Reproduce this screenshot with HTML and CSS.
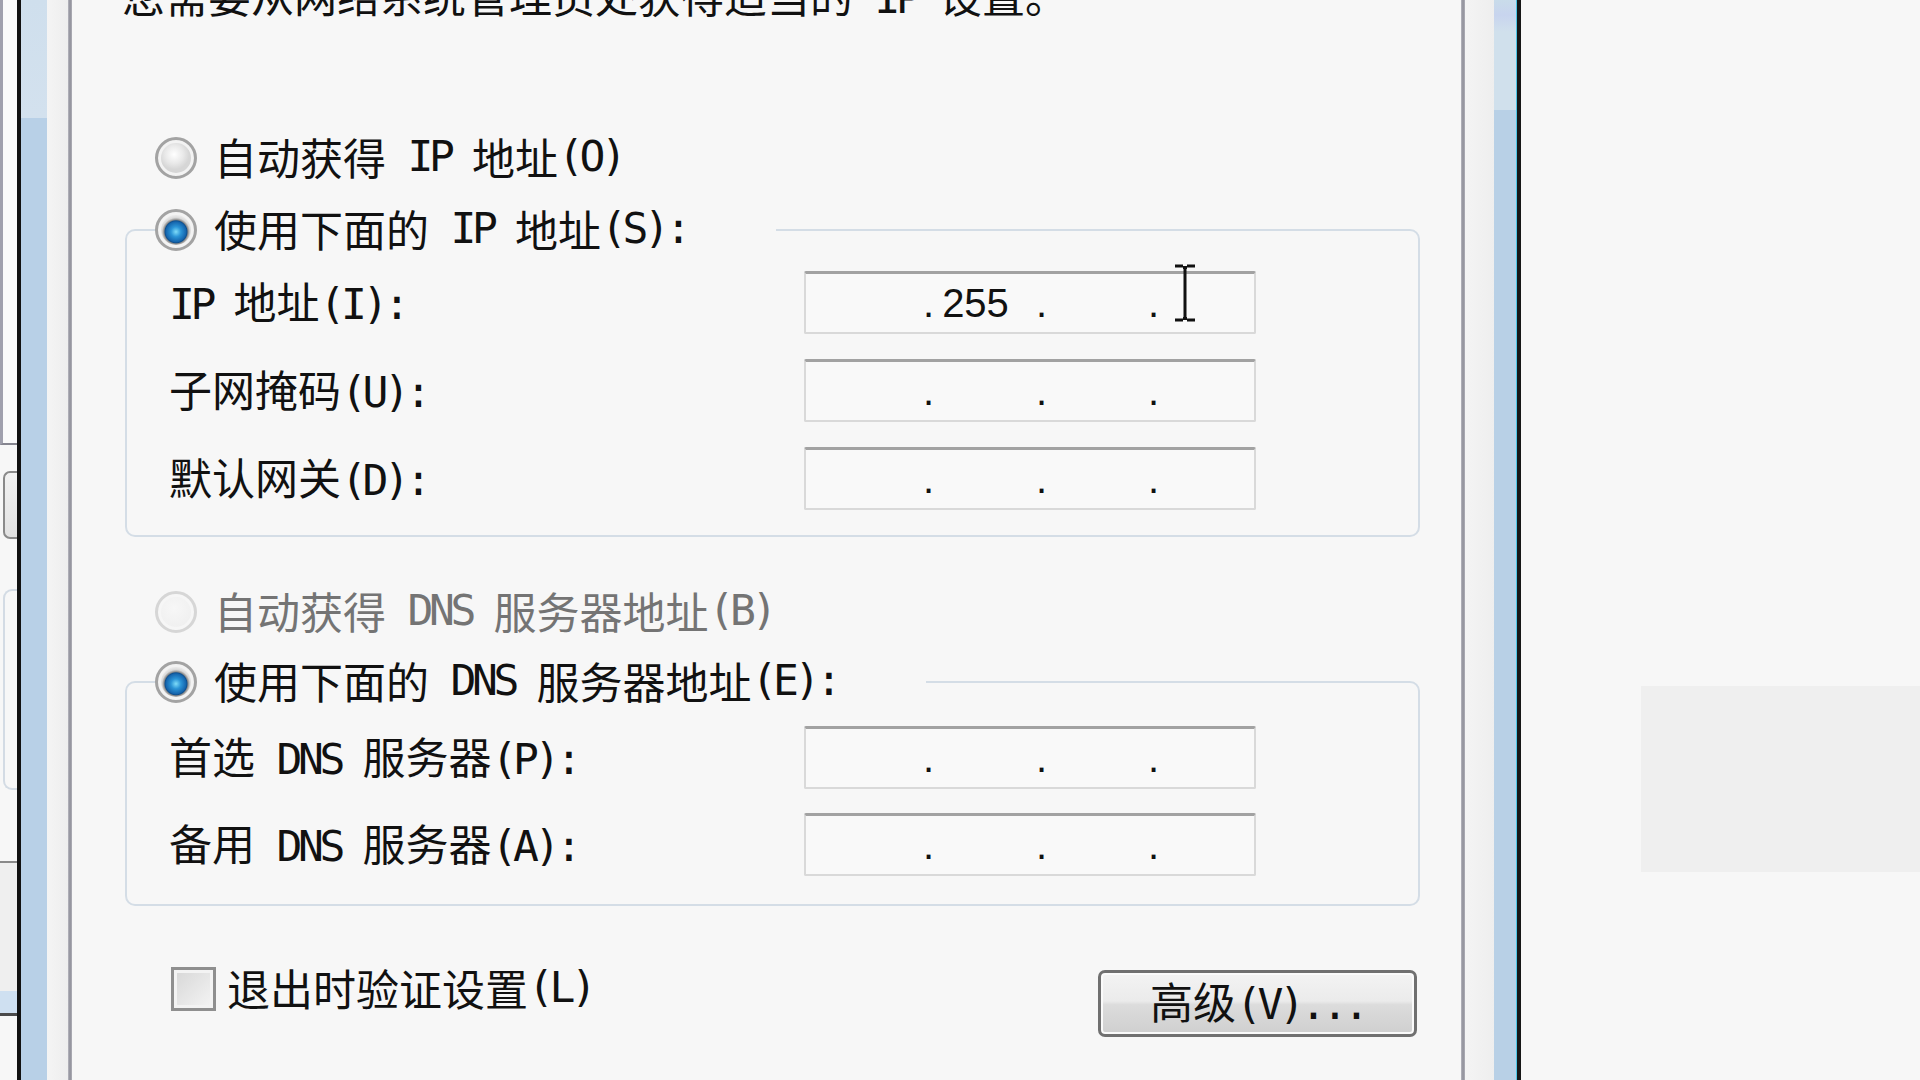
FILE: index.html
```html
<!DOCTYPE html>
<html lang="zh-CN">
<head>
    <meta charset="UTF-8">
    <title>Internet 协议版本 4 (TCP/IPv4) 属性</title>
    <link rel="stylesheet" href="styles.css">
</head>
<body>
<div class="screen">
    <div class="side-left">
        <div class="behind">
            <div class="behind-panel"></div>
            <div class="behind-button"></div>
            <div class="behind-group"></div>
            <div class="behind-taskbar"><div class="behind-strip"></div></div>
        </div>
        <div class="frame-dark"></div>
        <div class="frame-glass"></div>
        <div class="frame-face"></div>
        <div class="frame-line"></div>
    </div>

    <main class="dialog">
        <p class="intro">您需要从网络系统管理员处获得适当的<span class="en"> IP </span>设置。</p>

        <div class="opt opt-top"><span class="radio"></span>自动获得<span class="en"> IP </span>地址<span class="en">(O)</span></div>

        <fieldset class="group group-ip">
            <legend><div class="opt"><span class="radio on"></span>使用下面的<span class="en"> IP </span>地址<span class="en">(S):</span></div></legend>
            <div class="fields">
                <div class="label"><span class="en">IP </span>地址<span class="en">(I):</span></div>
                <div class="ip">
                    <span class="oct"></span><span class="dot">.</span><span class="oct">255</span><span class="dot">.</span><span class="oct"></span><span class="dot">.</span><span class="oct"></span>
                    <svg class="ibeam" width="24" height="60" viewBox="0 0 24 60">
                        <path d="M2 3h8M14 3h8M10 4.5h4M12 5v50M10 55.5h4M2 57h8M14 57h8" stroke="#111" stroke-width="3" fill="none"/>
                    </svg>
                </div>
                <div class="label">子网掩码<span class="en">(U):</span></div>
                <div class="ip">
                    <span class="oct"></span><span class="dot">.</span><span class="oct"></span><span class="dot">.</span><span class="oct"></span><span class="dot">.</span><span class="oct"></span>
                </div>
                <div class="label">默认网关<span class="en">(D):</span></div>
                <div class="ip">
                    <span class="oct"></span><span class="dot">.</span><span class="oct"></span><span class="dot">.</span><span class="oct"></span><span class="dot">.</span><span class="oct"></span>
                </div>
            </div>
        </fieldset>

        <div class="opt opt-top opt-off"><span class="radio off"></span>自动获得<span class="en"> DNS </span>服务器地址<span class="en">(B)</span></div>

        <fieldset class="group group-dns">
            <legend><div class="opt"><span class="radio on"></span>使用下面的<span class="en"> DNS </span>服务器地址<span class="en">(E):</span></div></legend>
            <div class="fields">
                <div class="label">首选<span class="en"> DNS </span>服务器<span class="en">(P):</span></div>
                <div class="ip">
                    <span class="oct"></span><span class="dot">.</span><span class="oct"></span><span class="dot">.</span><span class="oct"></span><span class="dot">.</span><span class="oct"></span>
                </div>
                <div class="label">备用<span class="en"> DNS </span>服务器<span class="en">(A):</span></div>
                <div class="ip">
                    <span class="oct"></span><span class="dot">.</span><span class="oct"></span><span class="dot">.</span><span class="oct"></span><span class="dot">.</span><span class="oct"></span>
                </div>
            </div>
        </fieldset>

        <div class="footer">
            <div class="check-row"><span class="check"></span>退出时验证设置<span class="en">(L)</span></div>
            <button class="btn">高级<span class="en">(V)...</span></button>
        </div>
    </main>

    <div class="side-right">
        <div class="frame-line"></div>
        <div class="frame-face face-right"></div>
        <div class="frame-glass glass-right"></div>
        <div class="frame-dark dark-right"></div>
    </div>

    <div class="desk">
        <div class="desk-panel"></div>
    </div>
</div>
</body>
</html>
```

FILE: styles.css
```css
html, body {
    margin: 0;
    padding: 0;
}
body {
    width: 1920px;
    height: 1080px;
    overflow: hidden;
    background-color: #f7f7f7;
    font-family: "Noto Sans CJK SC", sans-serif;
    font-size: 43px;
    color: #111;
}
.en {
    font-family: "DejaVu Sans Mono", "Liberation Mono", monospace;
    letter-spacing: -4.4px;
    white-space: pre;
}
.screen {
    display: flex;
    height: 1080px;
}

/* window behind, left edge */
.side-left {
    display: flex;
    width: 72px;
    flex-shrink: 0;
}
.behind {
    width: 17px;
    display: flex;
    flex-direction: column;
    background-color: #f7f7f7;
}
.behind-panel {
    height: 443px;
    border-left: 3px solid #a0a0ad;
    border-bottom: 2px solid #85858f;
    background-color: #fafafa;
}
.behind-button {
    height: 64px;
    margin: 26px 0 0 3px;
    border: 2px solid #8a8a8a;
    border-right: none;
    border-radius: 7px 0 0 7px;
    background: linear-gradient(#f2f2f2, #e2e2e2);
}
.behind-group {
    height: 197px;
    margin: 50px 0 0 3px;
    border: 2px solid #d3dbe4;
    border-right: none;
    border-radius: 9px 0 0 9px;
}
.behind-taskbar {
    height: 150px;
    margin-top: 71px;
    border-top: 2px solid #8a8a8a;
    border-bottom: 3px solid #4a4a4a;
    background-color: #efefef;
    display: flex;
    flex-direction: column;
    justify-content: flex-end;
}
.behind-strip {
    height: 22px;
    background-color: #cfe0f1;
}

/* dialog frame */
.frame-dark {
    width: 4px;
    background-color: #111;
}
.frame-glass {
    width: 26px;
    background: linear-gradient(#cfdfed 0, #d3e1ee 118px, #b8d0e7 118px);
}
.frame-face {
    width: 21px;
    background: linear-gradient(to right, #f4f4f4, #eeeeee);
}
.frame-line {
    width: 4px;
    background: linear-gradient(to right, #b8b8c0, #8e8e98, #b0b0b8);
}
.side-right {
    display: flex;
    width: 60px;
    flex-shrink: 0;
}
.face-right {
    width: 29px;
}
.glass-right {
    width: 22px;
    background: linear-gradient(#c9dcea 0, #c8d4ee 15px, #d0e0ec 32px, #d0e0ec 110px, #b8d0e6 110px);
}
.dark-right {
    width: 5px;
    background: linear-gradient(to right, #4cc6e6 0, #4cc6e6 1px, #161616 1px);
}

/* content */
.dialog {
    width: 1389px;
    flex-shrink: 0;
    box-sizing: border-box;
    padding: 0 41px 0 53px;
    background-color: #f7f7f7;
}
.intro {
    margin: -27px 0 0 -3px;
    height: 43px;
    line-height: 43px;
    white-space: nowrap;
}
.opt {
    display: flex;
    align-items: center;
    height: 56px;
    box-sizing: border-box;
    padding-bottom: 5px;
    white-space: nowrap;
}
.opt-top {
    margin: 114px 0 0 30px;
}
.opt-off {
    margin-top: 47px;
    color: #747474;
}
.radio {
    width: 42px;
    height: 42px;
    box-sizing: border-box;
    border-radius: 50%;
    border: 3px solid #a3a3a3;
    margin: 5px 17px 0 0;
    background: radial-gradient(circle at 45% 40%, #ffffff 0, #e9e9e9 9px, #d6d6d6 15px);
    box-shadow: inset 0 0 0 3px #f3f3f3;
    flex-shrink: 0;
}
.radio.on {
    background:
        radial-gradient(circle at 50% 55%, #7fdcf8 0, #2b94d6 5px, #1565ad 10px, #0f4f8c 11px, #8c8c8c 12px, #d8d8d8 14px, #e8e8e8 16px);
}
.radio.off {
    border-color: #d6d6d6;
    background: radial-gradient(circle at 45% 40%, #f7f7f7, #ececec);
    box-shadow: inset 0 0 0 3px #f6f6f6;
}

.group {
    margin: 16px 0 0 0;
    padding: 0;
    min-width: 0;
    border: 2px solid #d4dde6;
    border-radius: 10px;
}
.group legend {
    margin-left: 28px;
    padding: 0 89px 0 0;
}
.group-dns {
    margin-top: 14px;
}
.fields {
    display: grid;
    grid-template-columns: 635px 452px;
    grid-auto-rows: 63px;
    row-gap: 25px;
    align-items: center;
    margin: 13px 0 25px 42px;
}
.group-dns .fields {
    row-gap: 24px;
    margin: 16px 0 28px 42px;
}
.label {
    white-space: nowrap;
    padding-bottom: 6px;
}
.ip {
    position: relative;
    height: 63px;
    box-sizing: border-box;
    border: 2px solid #d9d9d9;
    border-top: 3px solid #a2a2a2;
    border-radius: 2px;
    background-color: #f9f9f9;
    display: grid;
    grid-template-columns: 117px 10px 103px 10px 102px 10px 1fr;
    font-family: "Liberation Sans", Arial, sans-serif;
    font-size: 40px;
    line-height: 58px;
    color: #111;
}
.oct {
    text-align: center;
    padding-right: 18px;
}
.dot {
    text-align: center;
}
.ibeam {
    position: absolute;
    left: 367px;
    top: -11px;
}

.footer {
    display: flex;
    justify-content: space-between;
    align-items: flex-start;
    margin: 55px 3px 0 46px;
}
.check-row {
    display: flex;
    align-items: center;
    height: 56px;
    box-sizing: border-box;
    padding-bottom: 4px;
    white-space: nowrap;
}
.check {
    width: 45px;
    height: 44px;
    box-sizing: border-box;
    border: 3px solid #8f8f8f;
    margin: 4px 11px 0 0;
    background: linear-gradient(135deg, #d6d6d6, #f5f5f5);
    box-shadow: inset 0 0 0 3px #f3f3f3;
}
.btn {
    width: 319px;
    height: 67px;
    margin-top: 9px;
    border: 3px solid #707070;
    border-radius: 7px;
    background: linear-gradient(#f3f3f3 0%, #ebebeb 46%, #dcdcdc 52%, #cfcfcf 100%);
    box-shadow: inset 0 0 0 2px #fafafa;
    font-family: inherit;
    font-size: 43px;
    color: #111;
    padding: 0 0 6px;
    line-height: 54px;
}

/* desktop on the right */
.desk {
    flex: 1;
    background-color: #f7f7f7;
}
.desk-panel {
    margin: 686px 0 0 120px;
    height: 186px;
    background-color: #efefef;
}
```
